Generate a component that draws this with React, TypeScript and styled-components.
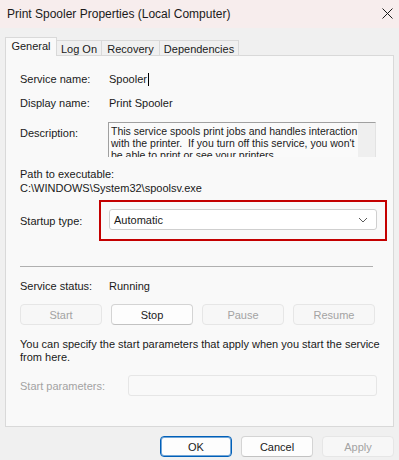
import React from "react";
import styled, { createGlobalStyle, css } from "styled-components";

const GlobalStyle = createGlobalStyle`
  html, body {
    margin: 0;
    padding: 0;
    background: #f0f0f0;
  }
  body {
    font-family: "Liberation Sans", Arial, sans-serif;
    font-size: 11px;
    color: #1a1a1a;
  }
  * {
    box-sizing: border-box;
  }
`;

const Window = styled.div`
  width: 399px;
  height: 460px;
  display: flex;
  flex-direction: column;
  background: #f0f0f0;
  overflow: hidden;
`;

const TitleBar = styled.div`
  height: 28px;
  display: flex;
  align-items: center;
  justify-content: space-between;
  padding: 0 6px 1px 7px;
  background: #f7eded;
  font-size: 12px;
  color: #1a1a1a;
`;

const CloseIcon = () => (
  <svg width="11" height="11" viewBox="0 0 11 11">
    <path d="M0.5 0.5 L10.5 10.5 M10.5 0.5 L0.5 10.5" stroke="#1a1a1a" strokeWidth="1" fill="none" />
  </svg>
);

const Body = styled.div`
  flex: 1;
  display: flex;
  flex-direction: column;
  padding: 9px 5px 0 5px;
`;

const TabStrip = styled.div`
  height: 18px;
  display: flex;
  align-items: flex-end;
`;

const Tab = styled.div<{ $active?: boolean; $w: number }>`
  width: ${(p) => p.$w}px;
  height: 15px;
  border: 1px solid #d9d9d9;
  border-bottom: none;
  background: #f0f0f0;
  display: flex;
  align-items: center;
  justify-content: center;
  padding-top: 1px;
  & + & {
    margin-left: -1px;
  }
  ${(p) =>
    p.$active &&
    css`
      height: 19px;
      margin-bottom: -1px;
      background: #f9f9f9;
      position: relative;
      z-index: 2;
      padding-top: 0;
      padding-bottom: 2px;
    `}
`;

const Panel = styled.div`
  width: 389px;
  height: 372px;
  border: 1px solid #d9d9d9;
  background: #f9f9f9;
  padding: 11px 0 0 14px;
  display: flex;
  flex-direction: column;
`;

const FieldRow = styled.div<{ $h?: number; $label?: number; $top?: number }>`
  display: grid;
  grid-template-columns: ${(p) => p.$label ?? 89}px auto;
  align-items: center;
  ${(p) => (p.$h ? `height: ${p.$h}px;` : "")}
  margin-top: ${(p) => p.$top ?? 0}px;
`;

const Label = styled.div<{ $disabled?: boolean }>`
  line-height: 14px;
  color: ${(p) => (p.$disabled ? "#a3a3a3" : "#1a1a1a")};
  white-space: nowrap;
`;

const Value = styled.div`
  line-height: 14px;
  white-space: nowrap;
  display: flex;
  align-items: center;
`;

const Caret = styled.span`
  display: inline-block;
  width: 1px;
  height: 13px;
  background: #000;
  margin-left: 1px;
`;

const DescLabel = styled(Label)`
  align-self: start;
  padding-top: 4px;
`;

const DescBox = styled.div`
  margin-left: -1px;
  width: 268px;
  height: 35px;
  border: 1px solid #a0a0a0;
  border-right-color: #e3e3e3;
  border-bottom: none;
  background: #fafafa;
  display: flex;
  overflow: hidden;
`;

const DescText = styled.div`
  flex: 1;
  padding: 2px 0 0 2px;
  font-size: 10.5px;
  line-height: 12px;
  white-space: nowrap;
  overflow: hidden;
`;

const ScrollTrack = styled.div`
  width: 17px;
  background: #efefef;
`;

const Block = styled.div<{ $top?: number }>`
  line-height: 14px;
  margin-top: ${(p) => p.$top ?? 0}px;
  white-space: nowrap;
`;

const Highlight = styled.div`
  width: 288px;
  border: 2px solid #c40000;
  padding: 7px 8px 9px 8px;
`;

const Select = styled.div`
  height: 21px;
  background: #ffffff;
  border: 1px solid #cfcfcf;
  border-radius: 3px;
  display: flex;
  align-items: center;
  justify-content: space-between;
  padding: 0 8px 0 4px;
`;

const Chevron = () => (
  <svg width="10" height="6" viewBox="0 0 10 6">
    <path d="M1 1 L5 5 L9 1" stroke="#5c5c5c" strokeWidth="1" fill="none" />
  </svg>
);

const Separator = styled.div`
  margin-top: 25px;
  width: 353px;
  height: 1px;
  background: #b0b0b0;
`;

const ButtonRow = styled.div<{ $top?: number; $gap: number }>`
  display: flex;
  gap: ${(p) => p.$gap}px;
  margin-top: ${(p) => p.$top ?? 0}px;
`;

const Button = styled.div<{ $w: number; $disabled?: boolean; $primary?: boolean }>`
  width: ${(p) => p.$w}px;
  height: 21px;
  border-radius: 4px;
  display: flex;
  align-items: center;
  justify-content: center;
  background: #fdfdfd;
  border: 1px solid #d4d4d4;
  border-bottom-color: #c2c2c2;
  color: #1a1a1a;
  ${(p) =>
    p.$disabled &&
    css`
      background: #f7f7f7;
      border-color: #e6e6e6;
      color: #a3a3a3;
    `}
  ${(p) =>
    p.$primary &&
    css`
      border: 1px solid #005fb8;
      box-shadow: inset 0 0 0 1px rgba(0, 95, 184, 0.55);
    `}
`;

const Paragraph = styled.div`
  margin-top: 13px;
  line-height: 13px;
  white-space: nowrap;
`;

const Input = styled.div`
  width: 249px;
  height: 21px;
  border: 1px solid #e6e6e6;
  border-radius: 3px;
  background: #f9f9f9;
`;

const Footer = styled.div`
  display: flex;
  justify-content: flex-end;
  gap: 9px;
  margin-top: 9px;
`;

export default function App() {
  return (
    <>
      <GlobalStyle />
      <Window>
        <TitleBar>
          <span>Print Spooler Properties (Local Computer)</span>
          <CloseIcon />
        </TitleBar>
        <Body>
          <TabStrip>
            <Tab $active $w={52}>General</Tab>
            <Tab $w={46}>Log On</Tab>
            <Tab $w={59}>Recovery</Tab>
            <Tab $w={80}>Dependencies</Tab>
          </TabStrip>
          <Panel>
            <FieldRow $h={24}>
              <Label>Service name:</Label>
              <Value>
                Spooler
                <Caret />
              </Value>
            </FieldRow>
            <FieldRow $h={24}>
              <Label>Display name:</Label>
              <Value>Print Spooler</Value>
            </FieldRow>
            <FieldRow $top={7}>
              <DescLabel>Description:</DescLabel>
              <DescBox>
                <DescText>
                  This service spools print jobs and handles interaction
                  <br />
                  with the printer.&nbsp; If you turn off this service, you won't
                  <br />
                  be able to print or see your printers.
                </DescText>
                <ScrollTrack />
              </DescBox>
            </FieldRow>
            <Block $top={10}>Path to executable:</Block>
            <Block>C:\WINDOWS\System32\spoolsv.exe</Block>
            <FieldRow $label={79} $top={5}>
              <Label>Startup type:</Label>
              <Highlight>
                <Select>
                  <span>Automatic</span>
                  <Chevron />
                </Select>
              </Highlight>
            </FieldRow>
            <Separator />
            <FieldRow $h={14} $top={12}>
              <Label>Service status:</Label>
              <Value>Running</Value>
            </FieldRow>
            <ButtonRow $top={11} $gap={9}>
              <Button $w={82} $disabled>Start</Button>
              <Button $w={82}>Stop</Button>
              <Button $w={82} $disabled>Pause</Button>
              <Button $w={82} $disabled>Resume</Button>
            </ButtonRow>
            <Paragraph>
              You can specify the start parameters that apply when you start the service
              <br />
              from here.
            </Paragraph>
            <FieldRow $label={108} $top={11}>
              <Label $disabled>Start parameters:</Label>
              <Input />
            </FieldRow>
          </Panel>
          <Footer>
            <Button $w={72} $primary>OK</Button>
            <Button $w={72}>Cancel</Button>
            <Button $w={72} $disabled>Apply</Button>
          </Footer>
        </Body>
      </Window>
    </>
  );
}
